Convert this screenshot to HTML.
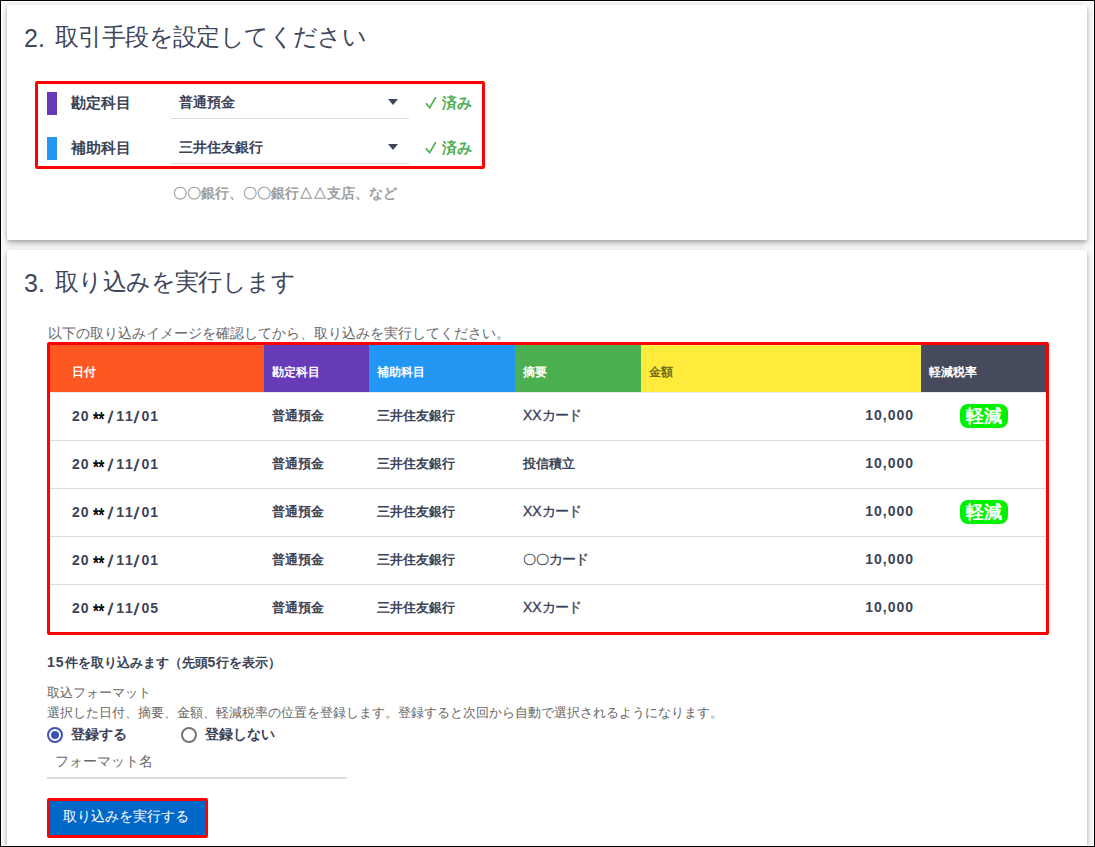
<!DOCTYPE html>
<html lang="ja">
<head>
<meta charset="utf-8">
<title>取り込み設定</title>
<style>
*{box-sizing:border-box;margin:0;padding:0}
html,body{width:1095px;height:847px;overflow:hidden;background:#fafafa}
body{font-family:"Liberation Sans",sans-serif;color:#3c4356;position:relative}
#frame{position:absolute;left:0;top:0;width:1095px;height:847px;border:1px solid #000;box-shadow:inset 0 0 0 1px #fff;z-index:50;pointer-events:none}
.card{position:absolute;left:7px;width:1080px;background:#fff;border-radius:2px;
 box-shadow:0 2px 4px -1px rgba(0,0,0,.2),0 4px 5px 0 rgba(0,0,0,.14),0 1px 10px 0 rgba(0,0,0,.12)}
.t{position:absolute;white-space:nowrap;line-height:1}
.h{font-size:24px;font-weight:400;color:#3f475a;letter-spacing:-.6px}
.h .n{display:inline-block;width:31px;letter-spacing:0;font-size:25px;position:relative;top:2px}
.b{font-weight:700}
.redbox{position:absolute;border:3px solid #f00;border-radius:2px;z-index:20}
.bar{position:absolute;left:47px;width:10px;height:23px}
.uline{position:absolute;height:1px;background:#dcdcdc}
.arrow{position:absolute;width:0;height:0;border-left:5px solid transparent;border-right:5px solid transparent;border-top:6px solid #3e4558}
.ok{color:#4caf50;font-size:15px;font-weight:700}
.chk{position:absolute;fill:none;stroke:#4caf50;stroke-width:1.7}
.gray{color:#686868}
/* table */
#tbl{position:absolute;left:48px;top:344px;width:999px;border-collapse:collapse;table-layout:fixed}
#tbl th{height:48px;font-size:12px;font-weight:700;color:#fff;text-align:left;padding:8px 8px 0 8px;vertical-align:middle}
#tbl td{height:48px;font-size:13px;font-weight:700;text-align:left;padding:0 8px;vertical-align:middle}
#tbl th:first-child,#tbl td:first-child{padding-left:24px}
#tbl td.r{text-align:right;padding-right:7px}
#tbl td.c{text-align:center}
#tbl td.lt{font-weight:400;-webkit-text-stroke:.35px #3c4356}
.xx{font-size:14px;letter-spacing:0}
.kn{font-size:14px;letter-spacing:-1px;position:relative;top:-.5px}
.num{font-size:14px;letter-spacing:1px;font-kerning:none}
.sl{display:inline-block;font-size:17px;line-height:10px;margin:0 2.2px 0 .3px;position:relative;top:1.5px;transform:skewX(-8deg)}
.sl~.sl{margin-right:1.5px}
.amt{position:relative;top:-1px}
.ast{display:inline-block;font-size:15px;line-height:1;color:#000;letter-spacing:-.3px;margin:0 4px 0 3.4px;position:relative;top:2px;transform:scaleY(1.4);transform-origin:50% 30%}
.badge{display:inline-block;width:48px;height:24px;border-radius:8px;background:#00f200;color:#fff;font-size:18px;line-height:24px;text-align:center;vertical-align:middle}
.radio{position:absolute;width:16px;height:16px;border-radius:50%;border:2px solid #757575}
.radio.on{border-color:#3f51b5}
.radio.on::after{content:"";position:absolute;left:2px;top:2px;width:8px;height:8px;border-radius:50%;background:#3f51b5}
#btn{position:absolute;left:50px;top:801px;width:155px;height:34px;background:#0068c8;color:#fff;font-size:14px;line-height:31px;text-align:left;padding-left:13px;white-space:nowrap}
</style>
</head>
<body>
<div id="frame"></div>

<!-- card 1 -->
<div class="card" style="top:5px;height:235px"></div>
<div class="t h" style="left:24px;top:24px"><span class="n">2.</span>取引手段を設定してください</div>

<div class="redbox" style="left:35px;top:81px;width:450px;height:88px"></div>
<div class="bar" style="top:92px;background:#673ab7"></div>
<div class="bar" style="top:137px;background:#2196f3"></div>
<div class="t b" style="left:71px;top:95px;font-size:15px">勘定科目</div>
<div class="t b" style="left:71px;top:140px;font-size:15px">補助科目</div>
<div class="t b" style="left:179px;top:95px;font-size:14px">普通預金</div>
<div class="t b" style="left:179px;top:140px;font-size:14px">三井住友銀行</div>
<div class="uline" style="left:171px;top:118px;width:238px"></div>
<div class="uline" style="left:171px;top:163px;width:238px"></div>
<div class="arrow" style="left:388px;top:99px"></div>
<div class="arrow" style="left:388px;top:144px"></div>
<svg class="chk" style="left:424px;top:95px" width="14" height="14" viewBox="0 0 14 14"><path d="M1.9 8.2 L5.7 12.6 L11.8 2.1"/></svg><div class="t ok" style="left:442px;top:95px">済み</div>
<svg class="chk" style="left:424px;top:140px" width="14" height="14" viewBox="0 0 14 14"><path d="M1.9 8.2 L5.7 12.6 L11.8 2.1"/></svg><div class="t ok" style="left:442px;top:140px">済み</div>
<div class="t b" style="left:173px;top:186px;font-size:14px;color:#9e9e9e">〇〇銀行、〇〇銀行△△支店、など</div>

<!-- card 2 -->
<div class="card" style="top:250px;height:640px"></div>
<div class="t h" style="left:24px;top:269px"><span class="n">3.</span>取り込みを実行します</div>
<div class="t gray" style="left:48px;top:326px;font-size:14px">以下の取り込みイメージを確認してから、取り込みを実行してください。</div>

<table id="tbl">
<colgroup><col style="width:216px"><col style="width:105px"><col style="width:146px"><col style="width:126px"><col style="width:280px"><col style="width:126px"></colgroup>
<thead><tr>
<th style="background:#ff5722">日付</th>
<th style="background:#673ab7">勘定科目</th>
<th style="background:#2196f3">補助科目</th>
<th style="background:#4caf50">摘要</th>
<th style="background:#ffeb3b;color:#756c1d">金額</th>
<th style="background:#454b5c">軽減税率</th>
</tr></thead>
<tbody>
<tr><td><span class="num">20<span class="ast">**</span><span class="sl">/</span>11<span class="sl">/</span>01</span></td><td>普通預金</td><td>三井住友銀行</td><td class="lt"><span class="xx">XX</span><span class="kn">カード</span></td><td class="r"><span class="num amt">10,000</span></td><td class="c"><span class="badge">軽減</span></td></tr>
<tr><td><span class="num">20<span class="ast">**</span><span class="sl">/</span>11<span class="sl">/</span>01</span></td><td>普通預金</td><td>三井住友銀行</td><td>投信積立</td><td class="r"><span class="num amt">10,000</span></td><td class="c"></td></tr>
<tr><td><span class="num">20<span class="ast">**</span><span class="sl">/</span>11<span class="sl">/</span>01</span></td><td>普通預金</td><td>三井住友銀行</td><td class="lt"><span class="xx">XX</span><span class="kn">カード</span></td><td class="r"><span class="num amt">10,000</span></td><td class="c"><span class="badge">軽減</span></td></tr>
<tr><td><span class="num">20<span class="ast">**</span><span class="sl">/</span>11<span class="sl">/</span>01</span></td><td>普通預金</td><td>三井住友銀行</td><td class="lt">〇〇<span class="kn">カード</span></td><td class="r"><span class="num amt">10,000</span></td><td class="c"></td></tr>
<tr><td><span class="num">20<span class="ast">**</span><span class="sl">/</span>11<span class="sl">/</span>05</span></td><td>普通預金</td><td>三井住友銀行</td><td class="lt"><span class="xx">XX</span><span class="kn">カード</span></td><td class="r"><span class="num amt">10,000</span></td><td class="c"></td></tr>
</tbody>
</table>
<div class="uline" style="left:48px;top:392px;width:999px;background:#e9e9ef"></div>
<div class="uline" style="left:48px;top:440px;width:999px"></div>
<div class="uline" style="left:48px;top:488px;width:999px"></div>
<div class="uline" style="left:48px;top:536px;width:999px"></div>
<div class="uline" style="left:48px;top:584px;width:999px"></div>
<div class="redbox" style="left:47px;top:342px;width:1002px;height:293px"></div>

<div class="t b" style="left:47px;top:655px;font-size:13px"><span class="num">15</span>件を取り込みます（先頭<span class="num">5</span>行を表示）</div>
<div class="t gray" style="left:47px;top:686px;font-size:13px">取込フォーマット</div>
<div class="t gray" style="left:47px;top:706px;font-size:13px">選択した日付、摘要、金額、軽減税率の位置を登録します。登録すると次回から自動で選択されるようになります。</div>
<div class="radio on" style="left:47px;top:727px"></div>
<div class="t b" style="left:71px;top:727px;font-size:14px">登録する</div>
<div class="radio" style="left:181px;top:727px"></div>
<div class="t b" style="left:205px;top:727px;font-size:14px">登録しない</div>
<div class="t gray" style="left:55px;top:754px;font-size:14px">フォーマット名</div>
<div class="uline" style="left:47px;top:777px;width:300px;height:2px"></div>

<div class="redbox" style="left:47px;top:798px;width:161px;height:40px"></div>
<div id="btn">取り込みを実行する</div>
</body>
</html>
